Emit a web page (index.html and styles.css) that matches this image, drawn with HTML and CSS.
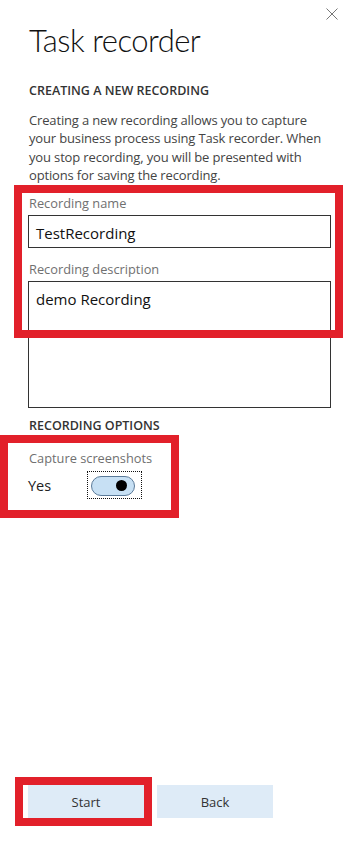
FILE: index.html
```html
<!DOCTYPE html>
<html lang="en">
<head>
  <meta charset="UTF-8">
  <title>Task recorder</title>
  <link rel="stylesheet" href="styles.css">
</head>
<body>

  <!-- Panel de grabacion -->
  <div class="panel">
    <div class="close-btn">
      <svg width="12" height="12" viewBox="0 0 12 12">
        <path d="M0.5 0.5 L11.5 11.5 M11.5 0.5 L0.5 11.5" stroke="#777" stroke-width="1" fill="none"/>
      </svg>
    </div>

    <h1 class="title">Task recorder</h1>

    <h4 class="section-title">CREATING A NEW RECORDING</h4>
    <p class="intro">Creating a new recording allows you to capture your business process using Task recorder. When you stop recording, you will be presented with options for saving the recording.</p>

    <div class="field field-first">
      <label>Recording name</label>
      <div class="input">TestRecording</div>
    </div>

    <div class="field">
      <label>Recording description</label>
      <div class="input textarea">demo Recording</div>
    </div>

    <h4 class="section-title options-title">RECORDING OPTIONS</h4>
    <div class="field field-toggle">
      <label>Capture screenshots</label>
      <div class="toggle-row">
        <span class="toggle-value">Yes</span>
        <span class="toggle-focus">
          <span class="toggle"><span class="knob"></span></span>
        </span>
      </div>
    </div>

    <div class="buttons">
      <button class="btn">Start</button>
      <button class="btn">Back</button>
    </div>

    <!-- marcas rojas -->
    <div class="mark mark-fields"></div>
    <div class="mark mark-toggle"></div>
    <div class="mark mark-start"></div>
  </div>

</body>
</html>
```

FILE: styles.css
```css
body {
  margin: 0;
  background: #fff;
  font-family: "Open Sans", "Noto Sans", sans-serif;
  color: #222;
}

.panel {
  position: relative;
  width: 353px;
  height: 841px;
  padding: 0 22px 0 28px;
  box-sizing: border-box;
  display: flex;
  flex-direction: column;
}

.close-btn {
  position: absolute;
  top: 8px;
  right: 15px;
  width: 12px;
  height: 12px;
}

.close-btn svg {
  display: block;
}

.title {
  margin: 20px 0 0 1px;
  font-family: Lato, "Open Sans", sans-serif;
  font-size: 31px;
  font-weight: 300;
  line-height: 40px;
  color: #111;
  letter-spacing: -0.5px;
}

.section-title {
  margin: 23px 0 0 1px;
  font-size: 12.5px;
  font-weight: 600;
  line-height: 16px;
  color: #333;
}

.intro {
  margin: 12px 0 0 1px;
  font-size: 13px;
  line-height: 18.3px;
  letter-spacing: -0.15px;
  color: #444;
}

.field {
  margin-top: 13px;
}

.field-first {
  margin-top: 11px;
}

.field label {
  display: block;
  font-size: 12.8px;
  line-height: 17px;
  color: #707070;
  margin-left: 1px;
}

.input {
  margin-top: 3px;
  border: 1px solid #333;
  padding: 2px 7px 0;
  font-size: 15px;
  line-height: 31px;
  box-sizing: border-box;
  height: 33px;
  color: #111;
}

.textarea {
  height: 127px;
  line-height: 18px;
  padding-top: 8px;
}

.options-title {
  margin-top: 10px;
}

.field-toggle {
  margin-top: 16px;
}

.toggle-row {
  display: flex;
  align-items: center;
  margin-top: 4px;
}

.toggle-value {
  font-size: 14.5px;
  color: #222;
  width: 59px;
}

.toggle-focus {
  display: inline-block;
  border: 1px dotted #111;
  padding: 4px 6px 2px 3px;
}

.toggle {
  position: relative;
  display: block;
  width: 42px;
  height: 18px;
  border: 1px solid #5a7a99;
  border-radius: 10px;
  background: #c7e0f4;
}

.knob {
  position: absolute;
  right: 7px;
  top: 3px;
  width: 11px;
  height: 11px;
  border-radius: 50%;
  background: #000;
}

.buttons {
  margin-top: auto;
  margin-bottom: 23px;
  display: flex;
  gap: 13px;
}

.btn {
  width: 116px;
  height: 33px;
  border: none;
  background: #deebf7;
  font-family: "Open Sans", "Noto Sans", sans-serif;
  font-size: 13px;
  color: #333;
}

/* Marcas rojas */
.mark {
  position: absolute;
  border: 8px solid #e2202a;
  box-sizing: border-box;
}

.mark-fields {
  left: 14px;
  top: 185px;
  width: 329px;
  height: 153px;
}

.mark-toggle {
  left: 0;
  top: 435px;
  width: 179px;
  height: 83px;
}

.mark-start {
  left: 15px;
  top: 777px;
  width: 137px;
  height: 49px;
}
```
